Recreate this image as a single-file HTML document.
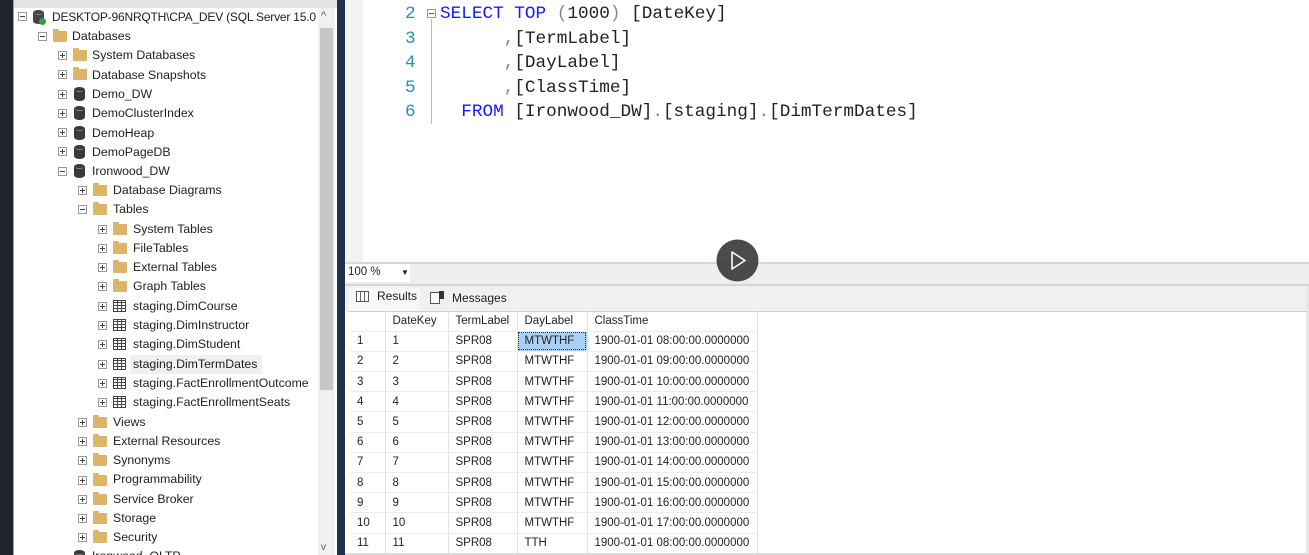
<!DOCTYPE html>
<html><head><meta charset="utf-8"><style>
*{margin:0;padding:0;box-sizing:border-box}
html,body{width:1309px;height:555px;overflow:hidden}
body{background:#fff;position:relative;font-family:"Liberation Sans",sans-serif;}
.a{position:absolute}
.t{position:absolute;font-size:12.3px;color:#1e1e1e;white-space:nowrap;line-height:19px}
.bx{position:absolute;width:9px;height:9px;border:1px solid #9a9a9a;background:#fff}
.bx::before{content:"";position:absolute;left:1px;top:3px;width:5px;height:1px;background:#444}
.bx.p::after{content:"";position:absolute;left:3px;top:1px;width:1px;height:5px;background:#444}
.fo{position:absolute;width:14px;height:11px;background:#dcb56a;border-radius:1px}
.fo::before{content:"";position:absolute;left:0;top:-2px;width:6px;height:3px;background:#dcb56a;border-radius:1px 1px 0 0}
.db{position:absolute;width:11px;height:14px;background:#3a3a3a;border-radius:5px/3px}
.db::before{content:"";position:absolute;left:1px;top:1px;width:9px;height:3px;border-radius:50%;border-bottom:1px solid #888}
.tb{position:absolute;width:13px;height:12px;border:1px solid #444;background:repeating-linear-gradient(90deg,#fff 0 3px,#444 3px 4px),#fff}
.tb::before{content:"";position:absolute;left:0;right:0;top:0;bottom:0;background:repeating-linear-gradient(0deg,transparent 0 2px,#444 2px 3px)}
.code{position:absolute;font-family:"Liberation Mono",monospace;font-size:17.7px;color:#222;white-space:pre;line-height:24.5px}
.ln{position:absolute;font-family:"Liberation Mono",monospace;font-size:17.7px;color:#2b91af;line-height:24.5px;left:405px}
.k{color:#1a1aff}.g{color:#888}
.grid{position:absolute;left:350px;top:311px;border-collapse:collapse;font-size:11.5px;color:#222;table-layout:fixed}
.grid td{height:20.2px;border-right:1px solid #e2e2e2;border-bottom:1px solid #ececec;padding:0 0 0 7px;white-space:nowrap;overflow:hidden}
</style></head><body>
<div class="a" style="left:0;top:0;width:13px;height:555px;background:#1e242c"></div>
<div class="a" style="left:13px;top:0;width:324px;height:8px;background:#e4e4e4"></div>
<div class="a" style="left:13px;top:0;width:1px;height:555px;background:#9aa0a8"></div>
<div class="a" style="left:337px;top:0;width:8px;height:555px;background:#22314a"></div>
<div class="a" style="left:345px;top:0;width:18px;height:262px;background:#f2f2f2"></div>
<!-- scrollbar -->
<div class="a" style="left:318px;top:8px;width:17px;height:547px;background:#f0f0f0"></div>
<div class="a" style="left:320px;top:28px;width:13px;height:362px;background:#c6c6c6"></div>
<div class="t" style="left:321px;top:7px;font-size:11px;color:#555">^</div>
<div class="t" style="left:321px;top:538px;font-size:10px;color:#555">v</div>

<!-- tree -->
<div class="bx" style="left:18px;top:12px"></div><div class="db" style="left:33px;top:10px;background:#444"></div><div class="a" style="left:39px;top:18px;width:7px;height:7px;border-radius:50%;background:#2e9e3e"></div><div class="t" style="left:52px;top:8px;font-size:12px;letter-spacing:-0.2px">DESKTOP-96NRQTH\CPA_DEV (SQL Server 15.0</div>
<div class="bx" style="left:38px;top:32px"></div><div class="fo" style="left:53px;top:31px"></div><div class="t" style="left:72px;top:27px">Databases</div>
<div class="bx p" style="left:58px;top:51px"></div><div class="fo" style="left:73px;top:50px"></div><div class="t" style="left:92px;top:46px">System Databases</div>
<div class="bx p" style="left:58px;top:70px"></div><div class="fo" style="left:73px;top:69px"></div><div class="t" style="left:92px;top:66px">Database Snapshots</div>
<div class="bx p" style="left:58px;top:90px"></div><div class="db" style="left:74px;top:87px"></div><div class="t" style="left:92px;top:85px">Demo_DW</div>
<div class="bx p" style="left:58px;top:109px"></div><div class="db" style="left:74px;top:106px"></div><div class="t" style="left:92px;top:104px">DemoClusterIndex</div>
<div class="bx p" style="left:58px;top:128px"></div><div class="db" style="left:74px;top:126px"></div><div class="t" style="left:92px;top:124px">DemoHeap</div>
<div class="bx p" style="left:58px;top:147px"></div><div class="db" style="left:74px;top:145px"></div><div class="t" style="left:92px;top:143px">DemoPageDB</div>
<div class="bx" style="left:58px;top:167px"></div><div class="db" style="left:74px;top:164px"></div><div class="t" style="left:92px;top:162px">Ironwood_DW</div>
<div class="bx p" style="left:78px;top:186px"></div><div class="fo" style="left:93px;top:185px"></div><div class="t" style="left:113px;top:181px">Database Diagrams</div>
<div class="bx" style="left:78px;top:205px"></div><div class="fo" style="left:93px;top:204px"></div><div class="t" style="left:113px;top:200px">Tables</div>
<div class="bx p" style="left:98px;top:225px"></div><div class="fo" style="left:113px;top:224px"></div><div class="t" style="left:133px;top:220px">System Tables</div>
<div class="bx p" style="left:98px;top:244px"></div><div class="fo" style="left:113px;top:243px"></div><div class="t" style="left:133px;top:239px">FileTables</div>
<div class="bx p" style="left:98px;top:263px"></div><div class="fo" style="left:113px;top:262px"></div><div class="t" style="left:133px;top:258px">External Tables</div>
<div class="bx p" style="left:98px;top:282px"></div><div class="fo" style="left:113px;top:281px"></div><div class="t" style="left:133px;top:277px">Graph Tables</div>
<div class="bx p" style="left:98px;top:302px"></div><div class="tb" style="left:113px;top:300px"></div><div class="t" style="left:133px;top:297px">staging.DimCourse</div>
<div class="bx p" style="left:98px;top:321px"></div><div class="tb" style="left:113px;top:319px"></div><div class="t" style="left:133px;top:316px">staging.DimInstructor</div>
<div class="bx p" style="left:98px;top:340px"></div><div class="tb" style="left:113px;top:338px"></div><div class="t" style="left:133px;top:335px">staging.DimStudent</div>
<div class="a" style="left:130px;top:355px;width:132px;height:19px;background:#f0f0f0"></div>
<div class="bx p" style="left:98px;top:360px"></div><div class="tb" style="left:113px;top:358px"></div><div class="t" style="left:133px;top:355px">staging.DimTermDates</div>
<div class="bx p" style="left:98px;top:379px"></div><div class="tb" style="left:113px;top:377px"></div><div class="t" style="left:133px;top:374px">staging.FactEnrollmentOutcome</div>
<div class="bx p" style="left:98px;top:398px"></div><div class="tb" style="left:113px;top:396px"></div><div class="t" style="left:133px;top:393px">staging.FactEnrollmentSeats</div>
<div class="bx p" style="left:78px;top:418px"></div><div class="fo" style="left:93px;top:417px"></div><div class="t" style="left:113px;top:413px">Views</div>
<div class="bx p" style="left:78px;top:437px"></div><div class="fo" style="left:93px;top:436px"></div><div class="t" style="left:113px;top:432px">External Resources</div>
<div class="bx p" style="left:78px;top:456px"></div><div class="fo" style="left:93px;top:455px"></div><div class="t" style="left:113px;top:451px">Synonyms</div>
<div class="bx p" style="left:78px;top:476px"></div><div class="fo" style="left:93px;top:475px"></div><div class="t" style="left:113px;top:470px">Programmability</div>
<div class="bx p" style="left:78px;top:495px"></div><div class="fo" style="left:93px;top:494px"></div><div class="t" style="left:113px;top:490px">Service Broker</div>
<div class="bx p" style="left:78px;top:514px"></div><div class="fo" style="left:93px;top:513px"></div><div class="t" style="left:113px;top:509px">Storage</div>
<div class="bx p" style="left:78px;top:533px"></div><div class="fo" style="left:93px;top:532px"></div><div class="t" style="left:113px;top:528px">Security</div>
<div class="db" style="left:74px;top:550px"></div><div class="t" style="left:92px;top:547px">Ironwood_OLTP</div>

<!-- editor -->
<div class="ln" style="top:2px">2</div><div class="ln" style="top:26.5px">3</div><div class="ln" style="top:51px">4</div><div class="ln" style="top:75.5px">5</div><div class="ln" style="top:100px">6</div>
<div class="a" style="left:427px;top:9px;width:9px;height:9px;border:1px solid #999"></div><div class="a" style="left:429px;top:13px;width:5px;height:1px;background:#555"></div>
<div class="a" style="left:431px;top:19px;width:1px;height:105px;background:#bbb"></div>
<div class="code" style="left:440px;top:2px"><span class="k">SELECT TOP</span> <span class="g">(</span>1000<span class="g">)</span> [DateKey]
      <span class="g">,</span>[TermLabel]
      <span class="g">,</span>[DayLabel]
      <span class="g">,</span>[ClassTime]
  <span class="k">FROM</span> [Ironwood_DW]<span class="g">.</span>[staging]<span class="g">.</span>[DimTermDates]</div>

<!-- splitter / zoom bar -->
<div class="a" style="left:345px;top:262px;width:964px;height:2px;background:#d8d8dc"></div>
<div class="a" style="left:345px;top:264px;width:964px;height:20px;background:#eeeef1"></div>
<div class="a" style="left:345px;top:264px;width:65px;height:18px;background:#fff"></div>
<div class="t" style="left:348px;top:263px;font-size:11.5px">100 %</div>
<div class="t" style="left:401px;top:263px;font-size:8px">▼</div>
<div class="a" style="left:345px;top:284px;width:964px;height:2px;background:#d4d4d8"></div>
<div class="a" style="left:345px;top:286px;width:964px;height:25px;background:#f0f0f0"></div>
<div class="a" style="left:348px;top:288px;width:72px;height:23px;background:#f7f7f7"></div>
<div class="a" style="left:356px;top:291px;width:13px;height:11px;border:1px solid #555;background:repeating-linear-gradient(90deg,#fff 0 3px,#666 3px 4px)"></div>
<div class="t" style="left:377px;top:287px;font-size:12px">Results</div>
<div class="a" style="left:430px;top:292px;width:10px;height:12px;border:1px solid #555;background:#fff"></div><div class="a" style="left:439px;top:291px;width:5px;height:8px;background:#333"></div>
<div class="t" style="left:452px;top:289px;font-size:12px">Messages</div>
<div class="a" style="left:347px;top:311px;width:962px;height:1px;background:#d0d0d0"></div>
<div class="a" style="left:1306px;top:286px;width:3px;height:269px;background:#e6e6e6"></div>

<table class="grid">
<tr><td style="width:35px"></td><td style="width:63px">DateKey</td><td style="width:69px">TermLabel</td><td style="width:70px">DayLabel</td><td style="width:170px">ClassTime</td></tr>
<tr><td>1</td><td>1</td><td>SPR08</td><td style="background:#a9d1f5;outline:1px dotted #333;outline-offset:-2px">MTWTHF</td><td>1900-01-01 08:00:00.0000000</td></tr>
<tr><td>2</td><td>2</td><td>SPR08</td><td>MTWTHF</td><td>1900-01-01 09:00:00.0000000</td></tr>
<tr><td>3</td><td>3</td><td>SPR08</td><td>MTWTHF</td><td>1900-01-01 10:00:00.0000000</td></tr>
<tr><td>4</td><td>4</td><td>SPR08</td><td>MTWTHF</td><td>1900-01-01 11:00:00.0000000</td></tr>
<tr><td>5</td><td>5</td><td>SPR08</td><td>MTWTHF</td><td>1900-01-01 12:00:00.0000000</td></tr>
<tr><td>6</td><td>6</td><td>SPR08</td><td>MTWTHF</td><td>1900-01-01 13:00:00.0000000</td></tr>
<tr><td>7</td><td>7</td><td>SPR08</td><td>MTWTHF</td><td>1900-01-01 14:00:00.0000000</td></tr>
<tr><td>8</td><td>8</td><td>SPR08</td><td>MTWTHF</td><td>1900-01-01 15:00:00.0000000</td></tr>
<tr><td>9</td><td>9</td><td>SPR08</td><td>MTWTHF</td><td>1900-01-01 16:00:00.0000000</td></tr>
<tr><td>10</td><td>10</td><td>SPR08</td><td>MTWTHF</td><td>1900-01-01 17:00:00.0000000</td></tr>
<tr><td>11</td><td>11</td><td>SPR08</td><td>TTH</td><td>1900-01-01 08:00:00.0000000</td></tr>
</table>
<div class="a" style="left:345px;top:553px;width:964px;height:2px;background:#dcdcdc"></div>

<!-- play button -->
<svg class="a" style="left:716px;top:239px" width="43" height="43"><circle cx="21.5" cy="21.5" r="21" fill="#3c3c3c" fill-opacity="0.92"/><path d="M16 13 L29 21.5 L16 30 Z" fill="none" stroke="#fff" stroke-width="1.6" stroke-linejoin="round"/></svg>
</body></html>
